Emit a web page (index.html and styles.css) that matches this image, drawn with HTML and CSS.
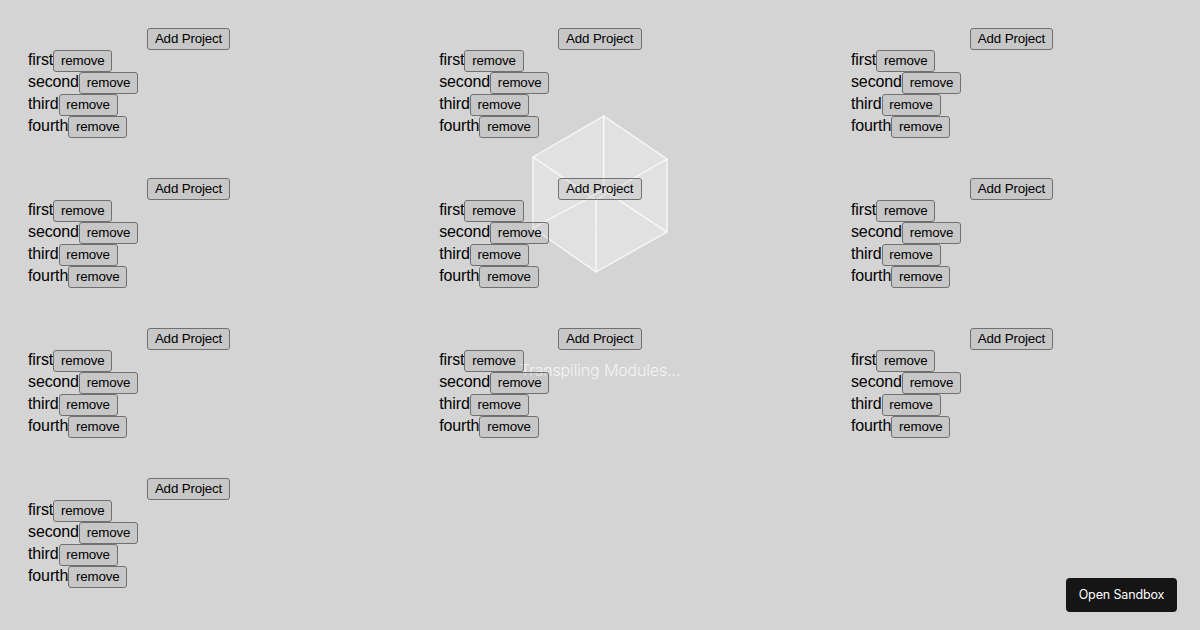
FILE: index.html
```html
<!DOCTYPE html>
<html lang="en">
<head>
    <meta charset="UTF-8">
    <title>Projects</title>
    <link rel="stylesheet" href="styles.css">
</head>
<body>
    <!-- loading overlay, sits behind the list -->
    <div class="loader">
        <svg class="cube" width="138" height="160" viewBox="0 0 138 160" fill="none">
            <path d="M72.700 2 L136 45 L136 118 L65 158 L2 114 L2 43 Z" fill="#fff" fill-opacity="0.3"/>
            <g stroke="#fff" stroke-opacity="0.85" stroke-width="1.300" stroke-linejoin="round" stroke-linecap="round">
                <path d="M72.700 2 L136 45 L136 118 L65 158 L2 114 L2 43 Z"/>
                <path d="M72.700 2 L72.700 76 M2 43 L65 86 M136 45 L65 86 M2 114 L72.700 76 M136 118 L72.700 76 M65 86 L65 158"/>
            </g>
        </svg>
        <p class="loader-text">Transpiling Modules...</p>
    </div>

    <div class="grid" id="grid"></div>

    <a href="#" class="open-sandbox">Open Sandbox</a>

    <script>
        var names = ['first', 'second', 'third', 'fourth'];
        var grid = document.getElementById('grid');

        for (var i = 0; i < 10; i++) {
            var rows = names.map(function (name) {
                return '<div class="row">' + name + '<button class="btn">remove</button></div>';
            }).join('');
            grid.innerHTML += '<section class="project"><div class="project-head"><button class="btn btn-add">Add Project</button></div>' + rows + '</section>';
        }
    </script>
</body>
</html>
```

FILE: styles.css
```css
html, body {
    height: 100%;
}

body {
    margin: 0;
    padding: 28px;
    box-sizing: border-box;
    overflow: hidden;
    background: #d4d4d4;
    color: #000;
    font-family: "Liberation Sans", Arial, sans-serif;
    font-size: 16px;
    letter-spacing: -0.12px;
}

.grid {
    position: relative;
    display: grid;
    grid-template-columns: 411.200px 411.800px 1fr;
    grid-auto-rows: 110px;
    row-gap: 40px;
}

.project {
    width: 321px;
}

.project-head {
    display: flex;
    justify-content: center;
}

.row {
    height: 22px;
    line-height: 20px;
    display: flex;
    align-items: flex-start;
}

.btn {
    height: 22px;
    padding: 0 6.800px;
    border: 1px solid #707070;
    border-radius: 3px;
    background: rgba(0, 0, 0, 0.06);
    color: #000;
    font-family: "Liberation Sans", Arial, sans-serif;
    font-size: 13.333px;
    letter-spacing: -0.15px;
    line-height: 20px;
}

.btn-add {
    padding: 0 7.200px;
}

/* loading overlay */
.loader {
    position: absolute;
    top: 114px;
    left: 500px;
    width: 200px;
    display: flex;
    flex-direction: column;
    align-items: center;
}

.cube {
    display: block;
}

.loader-text {
    margin: 86px 0 0;
    font-family: Inter, sans-serif;
    font-size: 16px;
    font-weight: 300;
    line-height: 20px;
    letter-spacing: -0.16px;
    white-space: nowrap;
    color: rgba(255, 255, 255, 0.75);
}

.open-sandbox {
    position: absolute;
    right: 23px;
    bottom: 18px;
    width: 111px;
    height: 34px;
    padding-bottom: 1px;
    box-sizing: border-box;
    display: flex;
    align-items: center;
    justify-content: center;
    border-radius: 4px;
    background: #151515;
    color: #fff;
    font-family: Inter, sans-serif;
    font-size: 12.500px;
    letter-spacing: -0.13px;
    text-decoration: none;
}
```
